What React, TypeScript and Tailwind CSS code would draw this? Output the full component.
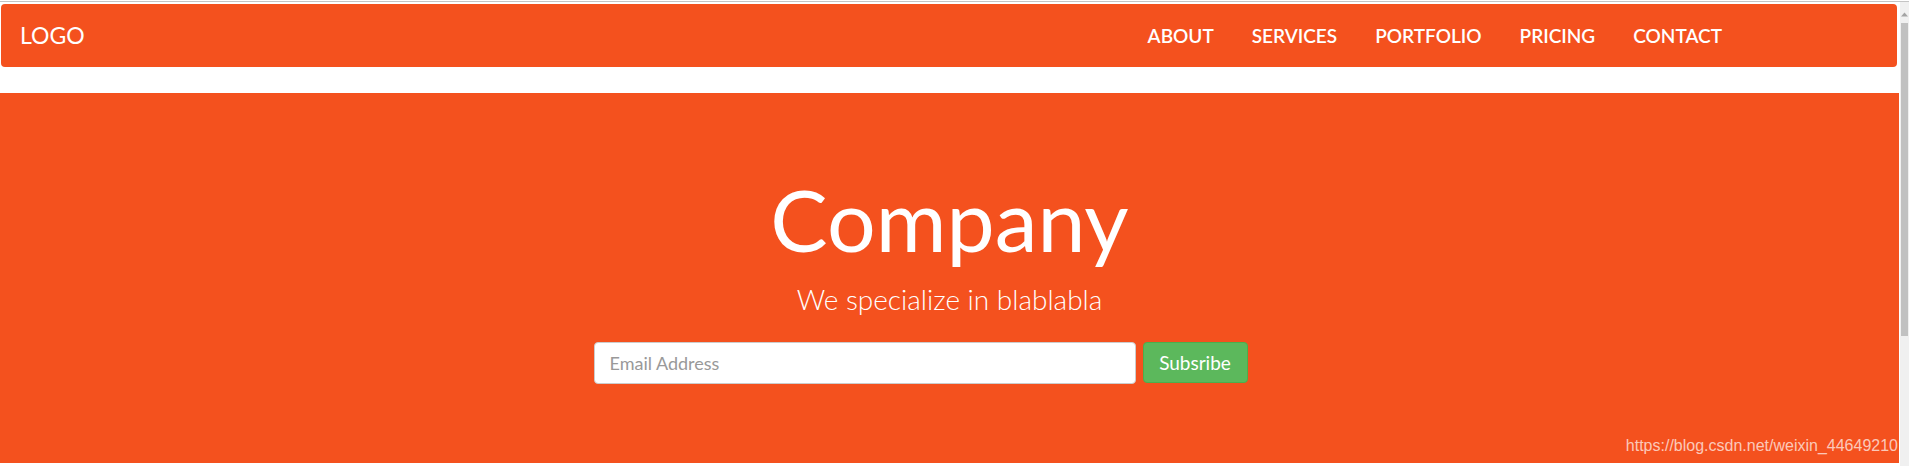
import React from "react";

const navItems = ["ABOUT", "SERVICES", "PORTFOLIO", "PRICING", "CONTACT"];

export default function App() {
  return (
    <div className="w-[1909px] h-[466px] bg-white overflow-hidden flex flex-col" style={{ fontFamily: "Lato, 'Noto Sans', sans-serif" }}>
      <div className="h-px bg-white" />
      <div className="h-px bg-[#c4c4c4]" />
      <div className="flex flex-1">
        <div className="w-[1900px] flex flex-col">
          <nav className="mt-[2px] ml-px mr-[3px] h-[63px] bg-[#f4511e] rounded-[4px] flex items-center justify-between pl-[19px] pr-[175px]">
            <span className="text-white text-[23px] leading-none">LOGO</span>
            <ul className="flex items-center gap-[38px]">
              {navItems.map((n) => (
                <li key={n} className="text-white text-[19px] leading-none font-semibold">{n}</li>
              ))}
            </ul>
          </nav>
          <section className="relative mt-[26px] w-[1899px] h-[370px] bg-[#f4511e] flex flex-col items-center">
            <h1 className="mt-[83px] text-white text-[86px] leading-none font-normal">Company</h1>
            <p className="mt-[23px] text-white text-[28px] leading-none font-light">We specialize in blablabla</p>
            <form className="mt-[29px] w-[712px] flex items-start">
              <input
                type="text"
                placeholder="Email Address"
                className="w-[542px] h-[42px] rounded-[4px] border border-[#cccccc] bg-white pl-[15px] text-[18px] text-[#555] placeholder:text-[#999] outline-none"
              />
              <button type="button" className="ml-[7px] w-[105px] h-[41px] rounded-[4px] bg-[#5cb85c] border border-[#4cae4c] text-white text-[19px] leading-none">
                Subsribe
              </button>
            </form>
            <span className="absolute right-px bottom-[9px] text-[16px] leading-none text-white/70" style={{ fontFamily: "'Liberation Sans', Arial, sans-serif" }}>
              https://blog.csdn.net/weixin_44649210
            </span>
          </section>
        </div>
        <div className="w-[9px] bg-[#f0f0f0] flex flex-col items-center">
          <svg width="7" height="5" viewBox="0 0 7 5" className="mt-[10px]">
            <polygon points="3.5,0.5 7,4.5 0,4.5" fill="#a3a3a3" />
          </svg>
          <div className="mt-[6px] w-[7px] h-[313px] bg-[#c1c1c1]" />
        </div>
      </div>
    </div>
  );
}
